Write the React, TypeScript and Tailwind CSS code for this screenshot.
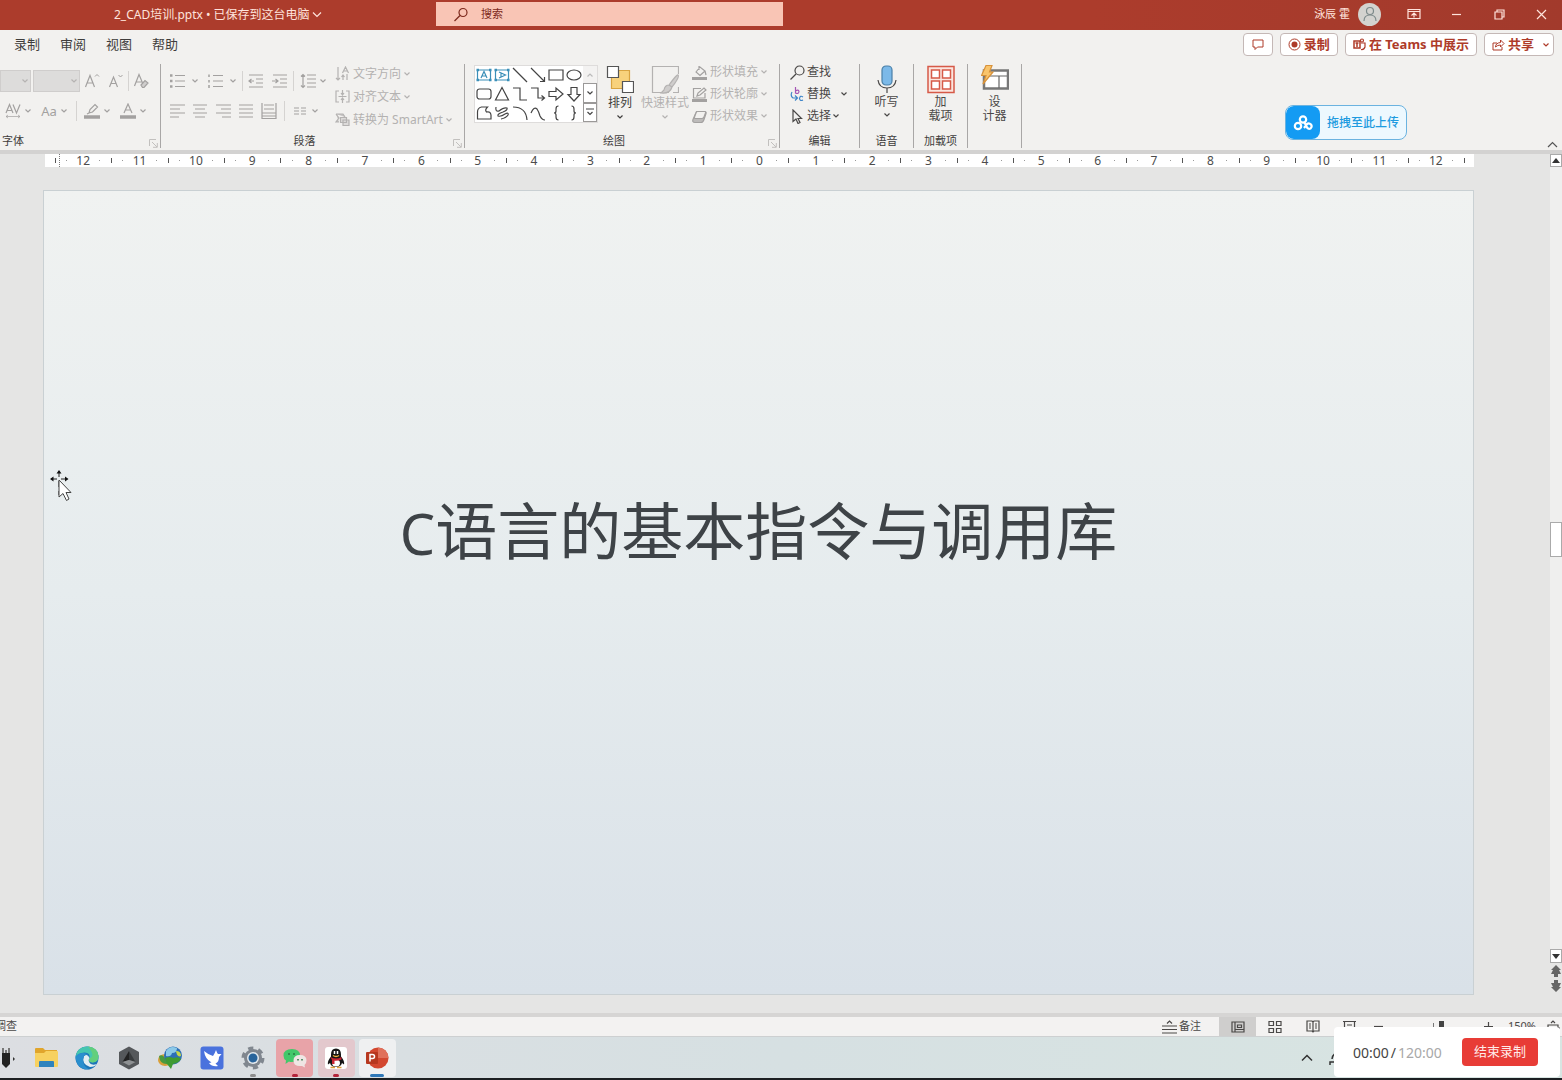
import React from "react";

interface IconProps {
  w?: number;
  h?: number;
  className?: string;
  children: React.ReactNode;
}

// stroke icon, viewBox is the same as its size
const Icon: React.FC<IconProps> = ({ w = 16, h = 16, className = "", children }) => (
  <svg
    width={w}
    height={h}
    viewBox={`0 0 ${w} ${h}`}
    fill="none"
    stroke="currentColor"
    strokeWidth="1.2"
    className={`shrink-0 ${className}`}
    aria-hidden="true"
  >
    {children}
  </svg>
);

const Caret = ({ className = "" }: { className?: string }) => (
  <Icon w={6} h={4} className={className}>
    <path d="M.5 .5 3 3 5.5 .5" />
  </Icon>
);

const Launcher = () => (
  <button aria-label="更多选项" className="absolute right-[2px] bottom-0 text-[#c2c0be]">
    <Icon w={9} h={9}>
      <path d="M.5 7V.5H7M3 3l5 5M8.3 4v4.3H4" strokeWidth="1" />
    </Icon>
  </button>
);

interface GroupProps {
  label?: string;
  className: string;
  launcher?: boolean;
  children: React.ReactNode;
}

const Group: React.FC<GroupProps> = ({ label, className, launcher, children }) => (
  <section className={`relative flex h-[84px] shrink-0 flex-col border-r border-[#a9a7a6] ${className}`}>
    <div className="flex flex-1">{children}</div>
    <div className={`h-[14px] text-center text-[11px] leading-[14px] text-[#3f3d3c] ${launcher ? "pr-4" : ""}`}>
      {label}
    </div>
    {launcher && <Launcher />}
  </section>
);

const Sep = ({ className = "" }: { className?: string }) => (
  <span className={`h-5 w-px bg-[#d5d3d1] ${className}`} />
);

const tool = "flex shrink-0 items-center justify-center";

const FontGroup = () => (
  <Group label="" className="w-[161px] text-[#a3a1a0]" launcher>
    <div className="flex flex-col gap-2 pt-[6px]">
      <div className="flex h-[22px] items-center">
        <div className="relative h-[22px] w-[31px]">
          <select aria-label="字体名称" className="h-full w-full appearance-none border border-[#cfcdcc] bg-[#dddcdb]" />
          <Caret className="absolute top-[9px] right-[3px] text-[#b5b3b2]" />
        </div>
        <div className="relative ml-[2px] h-[22px] w-[47px]">
          <select aria-label="字号" className="h-full w-full appearance-none border border-[#cfcdcc] bg-[#dddcdb]" />
          <Caret className="absolute top-[9px] right-[3px] text-[#b5b3b2]" />
        </div>
        <button aria-label="增大字号" className={`${tool} w-6`}>
          <Icon>
            <path d="M1.500 14 6 2.500 10.500 14M3 10h6" />
            <path d="M11 3.500 13 1.500 15 3.500" strokeWidth="1" />
          </Icon>
        </button>
        <button aria-label="减小字号" className={`${tool} w-6`}>
          <Icon>
            <path d="M1.500 14 5.500 4 9.500 14M3 10.500h5" />
            <path d="M10.500 2 12.500 4 14.500 2" strokeWidth="1" />
          </Icon>
        </button>
        <Sep />
        <button aria-label="清除格式" className={`${tool} w-6`}>
          <Icon>
            <path d="M1.500 13 6 1.500 10 11M3 9h6" />
            <path d="m8 12 4-4.500 3 2.500-4 4.500H9.500Z" fill="#d0cecd" />
          </Icon>
        </button>
      </div>
      <div className="flex h-[22px] items-center">
        <button aria-label="字符间距" className={`${tool} w-9 gap-1`}>
          <Icon>
            <path d="M1 10 4.500 1.500 8 10M2.200 7.500h4.600M8 1.500 11.500 10 15 1.500" />
            <path d="M1 13.500h14M3 12l-2 1.500L3 15M13 12l2 1.500L13 15" strokeWidth=".7" />
          </Icon>
          <Caret />
        </button>
        <button aria-label="更改大小写" className={`${tool} w-9 gap-1 text-[13px] leading-4`}>
          <span>Aa</span>
          <Caret />
        </button>
        <Sep className="mx-1" />
        <button aria-label="突出显示" className={`${tool} w-8 gap-1`}>
          <Icon>
            <path d="m5 10 1-3.500 5-5 2.500 2.500-5 5ZM5 10l-2 1" />
            <path d="M0 14h16" strokeWidth="3.500" />
          </Icon>
          <Caret />
        </button>
        <button aria-label="字体颜色" className={`${tool} w-10 gap-1`}>
          <Icon>
            <path d="M4 10 8 1l4 9M5.500 7h5" />
            <path d="M0 14h16" strokeWidth="3.500" />
          </Icon>
          <Caret />
        </button>
      </div>
    </div>
    <span className="absolute bottom-0 left-[2px] text-[11px] leading-[14px] text-[#3f3d3c]">字体</span>
  </Group>
);

const alignments = [
  { name: "左对齐", d: "M1 2h15M1 6h10M1 10h15M1 14h9" },
  { name: "居中", d: "M1 2h14M3 6h10M1 10h14M3 14h10" },
  { name: "右对齐", d: "M1 2h15M6 6h10M1 10h15M7 14h9" },
  { name: "两端对齐", d: "M1 2h14M1 6h14M1 10h14M1 14h14" },
  { name: "分散对齐", d: "M1 0v16M15 0v16M3 2h10M3 6h10M1 10h14M1 13h14M1 15.500h14" },
];

const textTools = [
  {
    name: "文字方向",
    icon: <path d="M3 1v13M1 12l2 2 2-2M8 14V9M6.500 11 8 9l1.500 2M7.500 7l3-6 3 6M8.500 5h4M12 8v6" />,
  },
  {
    name: "对齐文本",
    icon: <path d="M4 2H1v11h3M11 2h3v11h-3M7.500 1v5M7.500 14V9M3.500 7.500h8M6 4l1.500 2L9 4M6 11l1.500-2L9 11" />,
  },
  {
    name: "转换为 SmartArt",
    icon: (
      <>
        <path d="M1 2h7l2 3M1 2l3 4-3 4h3" fill="#c6c4c3" />
        <path d="M5.500 5.500h6v5h-6zM8 8h6v5.500H8z" fill="#dddbda" />
      </>
    ),
  },
];

const ParagraphGroup = () => (
  <Group label="段落" className="w-[304px] text-[#a3a1a0]" launcher>
    <div className="flex w-[174px] flex-col gap-2 pt-[6px] pl-1">
      <div className="flex h-[22px] items-center">
        <button aria-label="项目符号" className={`${tool} w-[38px] gap-[6px]`}>
          <Icon>
            <path d="M5 2.500h10M5 8h10M5 13.500h10" />
            <path d="M0 2.500h2.500M0 8h2.500M0 13.500h2.500" strokeWidth="2.500" />
          </Icon>
          <Caret />
        </button>
        <button aria-label="编号" className={`${tool} w-[38px] gap-[6px]`}>
          <Icon>
            <path d="M5 2.500h10M5 8h10M5 13.500h10" />
            <path d="M1 1.500V4M1 7v2.500M1 12v3" strokeWidth="1.500" />
          </Icon>
          <Caret />
        </button>
        <Sep className="mx-px" />
        <button aria-label="减少缩进" className={`${tool} w-6`}>
          <Icon>
            <path d="M1 2h14M8 6h7M8 10h7M1 14h14M6 8H1M3.500 6 1 8l2.500 2" />
          </Icon>
        </button>
        <button aria-label="增加缩进" className={`${tool} w-6`}>
          <Icon>
            <path d="M1 2h14M8 6h7M8 10h7M1 14h14M0 8h5.500M3.500 6 6 8l-2.500 2" />
          </Icon>
        </button>
        <Sep className="mx-px" />
        <button aria-label="行距" className={`${tool} w-9 gap-1`}>
          <Icon>
            <path d="M7 2h9M7 6h9M7 10h9M7 14h9M3 1.500v13M1 3.500l2-2 2 2M1 12.500l2 2 2-2" />
          </Icon>
          <Caret />
        </button>
      </div>
      <div className="flex h-[22px] items-center">
        {alignments.map((a) => (
          <button key={a.name} aria-label={a.name} className={`${tool} w-[23px]`}>
            <Icon>
              <path d={a.d} />
            </Icon>
          </button>
        ))}
        <Sep className="mx-1" />
        <button aria-label="分栏" className={`${tool} w-8 gap-[5px]`}>
          <Icon w={14}>
            <path d="M1 5h5M1 8h5M1 11h5M8 5h5M8 8h5M8 11h5" strokeWidth="1" />
          </Icon>
          <Caret />
        </button>
      </div>
    </div>
    <div className="-mt-[2px] flex flex-col text-[12px] text-[#b4b2b1]">
      {textTools.map((t) => (
        <button key={t.name} className="flex h-[23px] items-center gap-[3px] whitespace-nowrap">
          <Icon w={15} h={15}>
            {t.icon}
          </Icon>
          <span>{t.name}</span>
          <Caret />
        </button>
      ))}
    </div>
  </Group>
);

// gallery of shapes, 6 x 3
const shapes = [
  <g stroke="#3b8fb8" key="box"><path d="M1.500 3h13v10h-13z" /><path d="M5 11 8 4.500l3 6.500M6 9h4" /><path d="M.5 3h2.500M13 3h2.500M.5 13h2.500M13 13h2.500" strokeWidth="2.500" /></g>,
  <g stroke="#3b8fb8" key="vbox"><path d="M1.500 3h13v10h-13z" /><path d="M5 5l6.500 3L5 11M7 6v4" /><path d="M.5 3h2.500M13 3h2.500M.5 13h2.500M13 13h2.500" strokeWidth="2.500" /></g>,
  <path key="line" d="M1 1l14 14" />,
  <path key="arrow" d="M1 1l13 13M14.500 10v4.500H10" />,
  <path key="rect" d="M1 3h14v10H1z" />,
  <ellipse key="oval" cx="8" cy="8" rx="7" ry="5" />,
  <rect key="round" x="1" y="3" width="14" height="10" rx="2.500" />,
  <path key="tri" d="M8 1.500 14.500 14h-13Z" />,
  <path key="elbow" d="M1 2h7v12h7" />,
  <path key="elbow2" d="M1 2h7v10h6M11.500 9.500l3 2.500-3 2.500" />,
  <path key="right" d="M1 5.500h7V2l7 6-7 6v-3.500H1z" />,
  <path key="down" d="M5 1.500h6v7h3L8 15 2 8.500h3z" />,
  <path key="free" d="M1.500 14V7q0-4 4-5h6q-3 3-1 5 4-1 4.500 3v4z" />,
  <path key="scrib" d="M2 2q-1 5 3 4 5-4 8-3 1 2-4 4-6 2-5 4 3 1 7-2 4-2 3 1-2 3-7 4" />,
  <path key="arc" d="M1 2q13 0 14 13" />,
  <path key="curve" d="M1 8q3-7 6-4 2 3 3 7 2 4 5 4" />,
  <path key="lb" d="M10.500 1Q8 1 8 4v2q0 2-2 2 2 0 2 2v2q0 3 2.500 3" />,
  <path key="rb" d="M5.500 1Q8 1 8 4v2q0 2 2 2-2 0-2 2v2q0 3-2.500 3" />,
];

const shapeTools = [
  {
    name: "形状填充",
    icon: (
      <>
        <path d="m4 7 4-5 5 4-5 4.500ZM7 1v4M13 6l1 4" />
        <path d="M0 13.500h15" strokeWidth="3" />
      </>
    ),
  },
  {
    name: "形状轮廓",
    icon: (
      <>
        <path d="M9 1.500H1.500V11H13V6M5 9l1-3 6-5 2 2-6 5Z" />
        <path d="M0 13.500h15" strokeWidth="3" />
      </>
    ),
  },
  {
    name: "形状效果",
    icon: (
      <>
        <path d="M4.500 2.500h8q2 0 1.500 2l-2 6q-1 3-3 3H3q-3 0-2-3Z" fill="#bdbbba" />
        <path d="M5.500 2.500h7q1.500 0 1 1.500l-1.500 4q-.500 1.500-2 1.500H3.500q-1.500 0-1-1.500L4 4q.5-1.500 1.500-1.500Z" fill="#f2f1ef" />
      </>
    ),
  },
];

const DrawingGroup = () => (
  <Group label="绘图" className="w-[315px]" launcher>
    <div className="flex pt-px pl-[9px]">
      <div className="flex h-[58px] w-[124px] border border-[#dedcdb] bg-white text-[#444]">
        <div className="grid flex-1 grid-cols-6 place-items-center">
          {shapes.map((s, i) => (
            <button key={i} aria-label={`形状 ${i + 1}`}>
              <Icon className="block">{s}</Icon>
            </button>
          ))}
        </div>
        <div className="flex w-[14px] flex-col">
          <button aria-label="上一行" className={`${tool} flex-1 bg-[#f3f2f1] text-[#bbb]`}>
            <Icon w={6} h={4}><path d="M.5 3.500 3 1l2.500 2.500" /></Icon>
          </button>
          <button aria-label="下一行" className={`${tool} flex-1 border border-[#9b9998]`}>
            <Caret />
          </button>
          <button aria-label="其他形状" className={`${tool} flex-1 border border-[#9b9998]`}>
            <Icon w={8} h={8}><path d="M0 1h8M1.500 4 4 6.500 6.500 4" /></Icon>
          </button>
        </div>
      </div>
      <button className="ml-[2px] flex w-10 flex-col items-center text-[12px] leading-4 text-[#3f3d3c]">
        <Icon w={28} h={30}>
          <path d="M5.500 5.500h18v18h-18z" fill="#f8d27c" stroke="#d9a441" />
          <path d="M1.500 1.500h11v11h-11zM16.500 16.500h11v11h-11z" fill="#fff" stroke="#555" />
        </Icon>
        <span>排列</span>
        <Caret className="mt-1" />
      </button>
      <button className="flex w-[50px] flex-col items-center text-[12px] leading-4 text-[#b4b2b1]">
        <Icon w={28} h={30}>
          <path d="M18 27.500H1.500v-26h26V9M27.500 22v5.500H22" fill="none" />
          <path d="M27 10q-1-1-9 10l3 2q8-10 6-12Zm-9 10q-4 0-5 5l-3 3q9 1 11-6Z" fill="#cfcdcc" />
        </Icon>
        <span>快速样式</span>
        <Caret className="mt-1" />
      </button>
      <div className="-mt-1 ml-[2px] flex flex-col text-[12px] text-[#b4b2b1]">
        {shapeTools.map((t) => (
          <button key={t.name} className="flex h-[22px] items-center gap-[3px] whitespace-nowrap">
            <Icon w={15} h={15} className="text-[#a3a1a0]">
              {t.icon}
            </Icon>
            <span>{t.name}</span>
            <Caret />
          </button>
        ))}
      </div>
    </div>
  </Group>
);

const EditGroup = () => (
  <Group label="编辑" className="w-20 text-[#4a4847]">
    <div className="-mt-[3px] flex flex-col pl-[10px] text-[12px]">
      <button className="flex h-[22px] items-center gap-[2px]">
        <Icon w={15} h={15}><circle cx="9.500" cy="5.500" r="4.500" /><path d="m6 9-5.500 5.500" /></Icon>
        <span>查找</span>
      </button>
      <button className="flex h-[22px] items-center gap-[2px]">
        <Icon w={15} h={15}>
          <path d="M5.500 0v6.500M5.500 4q3-2 3.500.5-.5 3-3.500 1.500" stroke="#a555b5" />
          <path d="M13 10q-3-2-3.500 1.500.5 3 3.500 1.500M2 5q-2 4 1 6h4M5 8.500 7.500 11 5 13.500" stroke="#3f86c9" />
        </Icon>
        <span>替换</span>
        <Caret className="ml-2" />
      </button>
      <button className="flex h-[22px] items-center gap-[2px]">
        <Icon w={15} h={15}><path d="M3 1v11.500l3-2.500 2 4.500 2-1-2-4h3.500Z" /></Icon>
        <span>选择</span>
        <Caret />
      </button>
    </div>
  </Group>
);

const bigButton = "flex flex-1 flex-col items-center pt-px text-[12px] leading-[14px] text-[#4a4847]";

const Ribbon = () => (
  <div className="relative flex h-[90px] shrink-0 items-start overflow-hidden bg-[#f2f1ef] pt-1">
    <FontGroup />
    <ParagraphGroup />
    <DrawingGroup />
    <EditGroup />
    <Group label="语音" className="w-[54px]">
      <button className={bigButton}>
        <Icon w={20} h={30}>
          <rect x="5" y="1" width="10" height="19" rx="4" fill="#7cb9e8" stroke="#4b80a8" />
          <path d="M1 15q1 8 9 8t9-8M10 23v5" />
        </Icon>
        <span>听写</span>
        <Caret className="mt-1" />
      </button>
    </Group>
    <Group label="加载项" className="w-[54px]">
      <button className={bigButton}>
        <Icon w={28} h={30}>
          <g stroke="#d65a48" strokeWidth="1.500">
            <path d="M1 1.500h26v26H1z" fill="#fbe6df" />
            <path d="M4.500 5h8v8h-8zM15.500 5h8v8h-8zM4.500 16h8v8h-8zM15.500 16h8v8h-8z" fill="#fff" />
          </g>
        </Icon>
        <span>加<br />载项</span>
      </button>
    </Group>
    <Group label="" className="w-[54px]">
      <button className={bigButton}>
        <Icon w={28} h={30}>
          <path d="M3 5.500h24v18H3z" fill="#fff" stroke="#777" strokeWidth="2.500" />
          <path d="M4 11h22M18 11v12" stroke="#666" />
          <path d="M5 .5h6L8.500 7H12L2 19l3-8.500H.5Z" fill="#f9c46b" stroke="#d8923a" />
        </Icon>
        <span>设<br />计器</span>
      </button>
    </Group>

    {/* floating upload pill */}
    <button className="absolute top-[45px] right-[155px] flex h-[35px] items-center overflow-hidden rounded-lg border border-[#6bb3e0] bg-[#edf8fe] text-[12px] font-medium text-[#1e9be0]">
      <span className="flex h-full w-[34px] items-center justify-center rounded-lg bg-[#149bf3] text-white">
        <Icon w={20} h={16}>
          <g strokeWidth="2.200">
            <circle cx="10" cy="4.500" r="3.200" />
            <circle cx="5" cy="11" r="3.200" />
            <path d="M11.500 7.500 14 12.500q1.500 2 3.500 1 2-2 .5-4-2-2-4-.5l-3 4" />
          </g>
        </Icon>
      </span>
      <span className="px-[7px]">拖拽至此上传</span>
    </button>
    <button aria-label="折叠功能区" className="absolute right-1 bottom-0 text-[#555]">
      <Icon w={11} h={11}><path d="M1 8l4.500-4.500L10 8" /></Icon>
    </button>
  </div>
);

const TitleBar = () => (
  <header className="flex h-[30px] shrink-0 items-center bg-linear-to-r from-[#ac3c2c] from-70% to-[#a23a2c] text-[11px] text-[#ffe3dc]">
    <button className="flex w-[436px] items-center gap-[2px] pl-[114px] text-[12px]">
      <span>2_CAD培训.pptx • 已保存到这台电脑</span>
      <Icon w={10} h={6}><path d="m1 .5 4 4 4-4" /></Icon>
    </button>
    <label className="mb-[2px] flex h-6 w-[347px] items-center gap-3 bg-[#f9c5b5] pl-[18px] text-[#7d2a1d]">
      <Icon w={15} h={15}><circle cx="9" cy="5.500" r="4" /><path d="M6 8.500.5 14" /></Icon>
      <input aria-label="搜索" placeholder="搜索" className="w-full bg-transparent outline-none placeholder:text-[#7d2a1d]" />
    </label>
    <div className="mb-[2px] flex flex-1 items-center justify-end">
      <span>泳辰 霍</span>
      <span className="mr-[11px] ml-2 flex size-[23px] items-center justify-center rounded-full bg-[#d3d3cf] text-[#7c8a8a]">
        <Icon><circle cx="8" cy="5" r="3.500" /><path d="M2 15q0-6 6-6t6 6" /></Icon>
      </span>
      <button aria-label="功能区显示选项" className={`${tool} w-[43px]`}>
        <Icon w={14} h={12}><path d="M1 1.500h12v9H1zM1 3.500h12M7 9.500V5.500M4.500 7.500 7 5l2.500 2.500" /></Icon>
      </button>
      <button aria-label="最小化" className={`${tool} w-[43px]`}>
        <Icon w={11} h={11}><path d="M1 5.500h9" /></Icon>
      </button>
      <button aria-label="还原" className={`${tool} w-[43px]`}>
        <Icon w={11} h={11}><path d="M1 3h7v7H1zM3 3V1h7v7H8" /></Icon>
      </button>
      <button aria-label="关闭" className={`${tool} w-[41px]`}>
        <Icon w={11} h={11}><path d="m1 1 9 9M10 1l-9 9" /></Icon>
      </button>
    </div>
  </header>
);

const pill = "flex h-[23px] items-center rounded border border-[#c4b8b6] bg-white";

const TabRow = () => (
  <nav className="flex h-[30px] shrink-0 items-center bg-[#f2f1ef] pr-2 pl-[14px] text-[13px] text-[#3f3d3c]">
    <div className="flex flex-1 gap-5">
      {["录制", "审阅", "视图", "帮助"].map((t) => (
        <button key={t}>{t}</button>
      ))}
    </div>
    <div className="-mt-px flex gap-[7px] text-[13px] font-bold text-[#ae3b29]">
      <button aria-label="批注" className={`${pill} w-[30px] justify-center`}>
        <Icon w={12} h={11}><path d="M1 1h10v7H5.500L3 10.500V8H1Z" strokeWidth="1" /></Icon>
      </button>
      <button className={`${pill} gap-[3px] px-[7px]`}>
        <Icon w={13} h={13}><circle cx="6.500" cy="6.500" r="5.500" strokeWidth="1" /><circle cx="6.500" cy="6.500" r="3" fill="currentColor" stroke="none" /></Icon>
        <span>录制</span>
      </button>
      <button className={`${pill} gap-[3px] px-[7px]`}>
        <Icon w={13} h={13}>
          <path d="M1 3h6v7H1zM2.500 5h3M4 5v4" strokeWidth="1.500" />
          <path d="M8 5h4v4q-1 3-4 2.500" />
          <circle cx="9" cy="2.500" r="1.500" />
        </Icon>
        <span>在 Teams 中展示</span>
      </button>
      <button className={`${pill} gap-[3px] pr-1 pl-[7px]`}>
        <Icon w={13} h={13}><path d="M5 5H1v7h9V9M3.500 9q0-4 5-4.500V2L12 5.500 8.500 9V7q-3 0-5 2Z" strokeWidth="1" /></Icon>
        <span>共享</span>
        <Caret className="ml-[6px]" />
      </button>
    </div>
  </nav>
);

const marks = Array.from({ length: 25 }, (_, i) => Math.abs(i - 12));

const Ruler = () => (
  <div className="relative ml-[2px] flex h-[13px] items-center bg-white pr-[9px] pl-[10px] text-[12px] leading-[13px] text-[#4c4c4c]">
    <span className="absolute left-[14px] h-full border-l border-dotted border-[#777]" />
    {marks.map((m, i) => (
      <div key={i} className="flex flex-1 items-center justify-between">
        <span className="h-[5px] w-px bg-[#555]" />
        <span className="size-px bg-[#999]" />
        <span className="flex w-3 justify-center">{m}</span>
        <span className="size-px bg-[#999]" />
        <span className="w-px" />
      </div>
    ))}
    <span className="h-[5px] w-px bg-[#555]" />
  </div>
);

const ScrollBar = () => (
  <aside className="flex w-3 shrink-0 flex-col items-center bg-[#efefee] text-[#333]">
    <button aria-label="向上滚动" className={`${tool} h-[13px] w-full border border-[#aaa] bg-white`}>
      <Icon w={8} h={5}><path d="M0 5 4 0l4 5Z" fill="currentColor" stroke="none" /></Icon>
    </button>
    <div className="flex w-full flex-1 flex-col">
      <div className="flex-[355]" />
      <div className="h-[35px] border border-[#aaa] bg-white" />
      <div className="flex-[391]" />
    </div>
    <button aria-label="向下滚动" className={`${tool} h-[14px] w-full border border-[#aaa] bg-white`}>
      <Icon w={8} h={5}><path d="M0 0 4 5l4-5Z" fill="currentColor" stroke="none" /></Icon>
    </button>
    <div className="flex w-full flex-col items-center bg-[#e6e6e5] pt-[2px] pb-5 text-[#666]">
      <button aria-label="上一张幻灯片">
        <Icon w={10} h={14}><path d="M5 0 0 5h2L0 9h3v3h4V9h3L8 5h2Z" fill="currentColor" stroke="none" /></Icon>
      </button>
      <button aria-label="下一张幻灯片">
        <Icon w={10} h={14}><path d="M5 13 0 8h2L0 4h3V1h4v3h3L8 8h2Z" fill="currentColor" stroke="none" /></Icon>
      </button>
    </div>
  </aside>
);

const Workspace = () => (
  <main className="flex min-h-0 flex-1 border-t-4 border-[#d3d2d1] bg-[#e5e5e4]">
    <div className="flex flex-1 flex-col pr-[76px] pb-[18px] pl-[43px]">
      <Ruler />
      <div className="relative mt-[23px] flex flex-1 flex-col items-center border border-[#c9d0d3] bg-linear-to-b from-[#f0f2f1] via-[#e6ecee] via-50% to-[#d9e1e8]">
        <div className="flex-[296]" />
        <h1 className="text-[62px] leading-[90px] text-[#3e4347]">
          <span className="text-[56px]">C</span>语言的基本指令与调用库
        </h1>
        <div className="flex-[417]" />
        {/* move cursor */}
        <svg width="22" height="32" viewBox="0 0 22 32" className="absolute top-[279px] left-[6px]" aria-hidden="true">
          <path d="M9 1v24M1 9h17" stroke="#222" strokeDasharray="6 4" />
          <path d="M9 0 6.500 3.500h5ZM0 9l3.500-2.500v5ZM18.500 9 15 6.500v5Z" fill="#111" />
          <path d="M9 10v17l4-3.500 3.500 7 2.500-1.500-3-6.500h5Z" fill="#fff" stroke="#444" />
        </svg>
      </div>
    </div>
    <ScrollBar />
  </main>
);

const StatusBar = () => (
  <div className="flex h-[23px] shrink-0 items-center justify-between overflow-hidden border-t-4 border-[#d6d5d4] bg-[#f3f2f1] text-[11px] text-[#4a4847]">
    <span className="-ml-[5px]">调查</span>
    <div className="flex h-full items-center">
      <button className="mr-[18px] flex items-center gap-[2px]">
        <Icon w={15} h={15}><path d="M0 7h15M0 10.500h15M0 14h15M5 4.500 7.500 2 10 4.500" /></Icon>
        <span>备注</span>
      </button>
      <button aria-label="普通视图" className={`${tool} h-full w-[37px] bg-[#cfcecd]`}>
        <Icon w={14} h={12}><path d="M1 1h12v10H1zM4 1v10M6.500 4h4v2.500h-4zM4 8.500h9" /></Icon>
      </button>
      <button aria-label="幻灯片浏览" className={`${tool} w-[38px]`}>
        <Icon w={14} h={14}><path d="M1 1.500h4.500v4H1zM8.500 1.500H13v4H8.500zM1 8.500h4.500v4H1zM8.500 8.500H13v4H8.500z" /></Icon>
      </button>
      <button aria-label="阅读视图" className={`${tool} w-[37px]`}>
        <Icon w={14} h={13}><path d="M1 1h5l1 1 1-1h5v10H8l-1 1-1-1H1ZM7 2v10M3 4h2M3 6h2M3 8h2M9 4h2M9 6h2M9 8h2" /></Icon>
      </button>
      <button aria-label="幻灯片放映" className={`${tool} w-[37px]`}>
        <Icon w={14} h={13}><path d="M0 1.500h13M1.500 1.500V9h10V1.500M4 5h5M6.500 9v3" /></Icon>
      </button>
      <button aria-label="缩小" className={`${tool} w-5`}>
        <Icon w={9} h={9}><path d="M0 4.500h9" /></Icon>
      </button>
      <div className="flex w-[88px] items-center pl-[45px]">
        <span className="h-[7px] w-px bg-[#777]" />
        <span className="ml-[5px] h-3 w-[5px] bg-[#444]" />
      </div>
      <button aria-label="放大" className={`${tool} w-6`}>
        <Icon w={9} h={9}><path d="M0 4.500h9M4.500 0v9" /></Icon>
      </button>
      <span className="w-11 text-center">150%</span>
      <button aria-label="适应窗口" className={`${tool} w-[18px]`}>
        <Icon w={14} h={14}><path d="M2 5h10v6H2zM5 3l2-2 2 2M0 8h3M11 8h3" /></Icon>
      </button>
    </div>
  </div>
);

interface TaskApp {
  name: string;
  tile?: string;
  bar?: string;
  icon: React.ReactNode;
}

const apps: TaskApp[] = [
  {
    name: "工具",
    icon: (
      <>
        <path d="M9 7h8v11l-4 4-4-4Z" fill="#222" />
        <path d="M10 2v5M16 2v5M13 4v3" stroke="#777" strokeWidth="2" />
        <path d="M20 11l2 2-2 2Z" fill="#333" />
      </>
    ),
  },
  {
    name: "文件资源管理器",
    icon: (
      <>
        <path d="M1 3q0-1 1-1h7l2 2h12v16H1Z" fill="#e0a52c" />
        <path d="M1 7h9l2-2h11q1 0 1 1v14q0 1-1 1H2q-1 0-1-1Z" fill="#f7d160" />
        <path d="M5 21v-5q0-1 1-1h13q1 0 1 1v5Z" fill="#2f83bd" />
      </>
    ),
  },
  {
    name: "Edge",
    icon: (
      <>
        <circle cx="12" cy="12" r="11.500" fill="#1d75b8" />
        <path d="M.5 11Q2 0 13 .5 23 1.500 23.500 10q0 6-6 6.500-5-.5-3-4 1-6-5-6Q3 7 .5 11Z" fill="#45c6b0" />
        <path d="M13 .5Q23 1.500 23.500 10q0 6-6 6.500-5-.5-3-4Q21 10 13 .5Z" fill="#62cf7c" />
        <path d="M9 10q-3 8 6 11 5 0 7-3-6 2-8-2-1-2 .5-4-2-5-5.500-2Z" fill="#e2eef2" />
        <path d="M.5 11Q3 6.500 9 7q3 .5 4 2-4-1-5 4-.5 7 6 10.300Q2 24 .5 11Z" fill="#2a8fce" />
      </>
    ),
  },
  {
    name: "立方",
    icon: (
      <>
        <path d="M12 .5 22 6v12l-10 5.500L2 18V6Z" fill="#55585b" />
        <path d="M12 5 5.500 16 12 14Z" fill="#222" />
        <path d="M12 5v9l6.500 2Z" fill="#383b3d" />
        <path d="M5.500 16 12 14l6.500 2-6.500 3.500Z" fill="#8e9193" />
      </>
    ),
  },
  {
    name: "下载管理器",
    icon: (
      <>
        <ellipse cx="7" cy="14" rx="7" ry="6" fill="#d9a03a" />
        <path d="M1 10q5-3 9 8Q2 19 1 10Z" fill="#4a9a3f" />
        <circle cx="15" cy="9.500" r="9" fill="#2c6fb7" />
        <path d="M8 5q4-6 11-3 0 5-5 5-1 4-6 3Z" fill="#8cc9e8" />
        <path d="M7 12q5-2 8 0 6-2 8 1-2 4-8 5l-2 5-4-5Z" fill="#3f9b32" />
        <path d="M18 5q5 0 5 5-4 2-5-5Z" fill="#c6d64b" />
      </>
    ),
  },
  {
    name: "飞鸟",
    icon: (
      <>
        <rect x=".5" y=".5" width="23" height="23" rx="3" fill="#4a72dd" />
        <path d="M4 5q4 3.500 9 5 2-3 3-6 1 3 2 4h3.500L19 11q0 5-3.500 6.500L18 20q-6 1-9-3l2.500-.5Q5 13 4 5Z" fill="#fff" />
      </>
    ),
  },
  {
    name: "设置",
    bar: "w-[6px] bg-[#8e8e8e]",
    icon: (
      <>
        <circle cx="12" cy="12" r="9" fill="#80878f" />
        <circle cx="12" cy="12" r="9.500" fill="none" stroke="#80878f" strokeWidth="4" strokeDasharray="5 4.950" />
        <circle cx="12" cy="12" r="6" fill="#e3e9ee" />
        <circle cx="12" cy="12" r="4.500" fill="#28649b" />
      </>
    ),
  },
  {
    name: "微信",
    tile: "bg-[#e8a3a8]",
    bar: "w-[6px] bg-[#b3243a]",
    icon: (
      <>
        <path d="M9 3q8 0 8 6.500T9 16q-2 0-3-.5L2.500 18l.5-3.500Q.500 13 .5 9.500.500 3 9 3Z" fill="#43c86a" />
        <path d="M17 9q6.500 0 6.500 5.500 0 3-2 4.500l.5 2.500-3-1.500H17q-6.500 0-6.500-5.500T17 9Z" fill="#efe6e4" />
        <path d="M6 7v2M11 7v2M15 13v1.500M19 13v1.500" stroke="#2d7a45" strokeWidth="1.500" />
      </>
    ),
  },
  {
    name: "QQ",
    tile: "bg-[#e3c8cd]",
    bar: "w-[6px] bg-[#b3243a]",
    icon: (
      <>
        <rect x="1" y="1" width="22" height="22" rx="3" fill="#fff" />
        <path d="M12 2.500q-5 0-5 6v2q-4 5-3 8l2-1.500q1 4 6 4t6-4l2 1.500q1-3-3-8v-2q0-6-5-6Z" fill="#161616" />
        <ellipse cx="12" cy="17" rx="4" ry="3.500" fill="#fff" />
        <path d="M10.500 5v3M13.500 5v3" stroke="#fff" strokeWidth="1.500" />
        <path d="M9 9.500q3 2 6 0" stroke="#f3b13c" strokeWidth="1.500" fill="none" />
        <path d="M6.500 11q5.500 3 11 0v2.500q-3 1.500-7 1.200V18H8v-4Z" fill="#c92332" />
        <path d="M6.500 21.500H11M13 21.500h4.500" stroke="#e5a13a" strokeWidth="1.500" />
      </>
    ),
  },
  {
    name: "PowerPoint",
    tile: "bg-[#eff0f1]",
    bar: "w-[14px] bg-[#2f78b8]",
    icon: (
      <>
        <circle cx="13" cy="12" r="10.500" fill="#d3472f" />
        <path d="M13 1.500A10.500 10.500 0 0 1 23.500 12H13Z" fill="#e0705a" />
        <rect x="1" y="6" width="12" height="12" rx="1" fill="#b7371f" />
        <path d="M5 15.500V8.500h2.500q2 0 2 2t-2 2H5" stroke="#fff" strokeWidth="1.500" fill="none" />
      </>
    ),
  },
];

const TaskBar = () => (
  <footer className="flex h-11 shrink-0 items-center justify-between overflow-hidden border-t border-b-2 border-t-[#cdd0d1] border-b-[#1c1f22] bg-linear-to-r from-[#dcdee2] via-[#d6e0e2] to-[#d8e5e2]">
    <div className="-ml-[14px] flex w-[410px] justify-between">
      {apps.map((a) => (
        <button
          key={a.name}
          aria-label={a.name}
          className={`flex h-[38px] w-[37px] flex-col items-center justify-end gap-1 rounded ${a.tile || ""}`}
        >
          <svg width="24" height="24" viewBox="0 0 24 24" aria-hidden="true">
            {a.icon}
          </svg>
          <span className={`h-[3px] rounded-full ${a.bar || "w-1"}`} />
        </button>
      ))}
    </div>
    <div className="flex items-center gap-4 pr-[219px] text-[#333]">
      <button aria-label="显示隐藏的图标">
        <Icon w={12} h={8}><path d="m1 6.500 5-5 5 5" strokeWidth="1.500" /></Icon>
      </button>
      <Icon w={14} h={16}><path d="M12 2Q4 2 3 9M1 15v-3h4" strokeWidth="1.500" /></Icon>
    </div>
  </footer>
);

const App = () => (
  <div
    lang="zh-CN"
    className="relative flex h-screen flex-col overflow-hidden bg-[#f2f1ef] font-['Noto_Sans','Noto_Sans_CJK_SC',sans-serif]"
  >
    <TitleBar />
    <TabRow />
    <Ribbon />
    <Workspace />
    <StatusBar />
    <TaskBar />

    {/* recorder overlay */}
    <div className="absolute right-[2px] bottom-[3px] flex h-[50px] w-[226px] items-center rounded bg-white pl-[19px] text-[14px] text-[#444]">
      <span className="flex flex-1 gap-[2px]">
        <span>00:00</span>
        <span>/</span>
        <span className="text-[#a8a8a8]">120:00</span>
      </span>
      <button className="mr-[22px] h-7 w-[76px] rounded bg-[#e83c36] text-[13px] text-[#ffecea]">结束录制</button>
    </div>
  </div>
);

export default App;
